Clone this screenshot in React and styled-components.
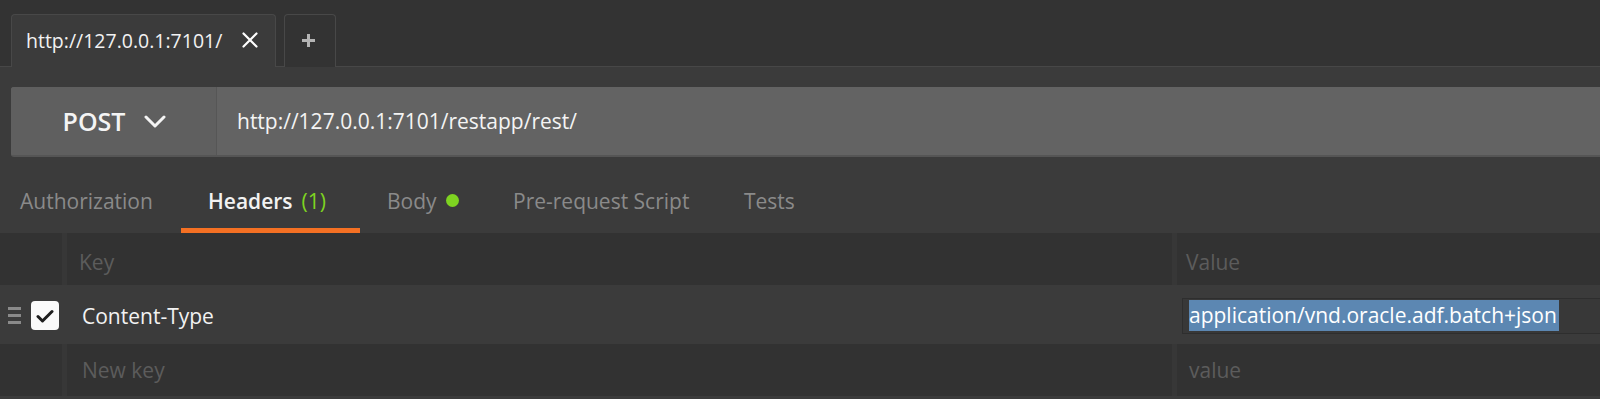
import React from 'react';
import styled, { createGlobalStyle } from 'styled-components';

const Global = createGlobalStyle`
  html, body {
    margin: 0;
    padding: 0;
    background: #333333;
    font-family: "Open Sans", "Noto Sans", sans-serif;
    overflow: hidden;
  }
`;

const Page = styled.div`
  width: 1600px;
  height: 399px;
  display: flex;
  flex-direction: column;
  background: #3b3b3b;
`;

const TabStrip = styled.div`
  height: 67px;
  box-sizing: border-box;
  background: #333333;
  border-bottom: 1px solid #474747;
  display: flex;
  align-items: flex-end;
  gap: 8px;
  padding-left: 11px;
`;

const RequestTab = styled.div`
  width: ${p => p.width}px;
  height: 53px;
  margin-bottom: -1px;
  box-sizing: border-box;
  background: ${p => (p.active ? '#3b3b3b' : '#333333')};
  border: 1px solid #484848;
  border-bottom: none;
  border-radius: 4px 4px 0 0;
  display: flex;
  align-items: center;
  justify-content: ${p => (p.active ? 'space-between' : 'center')};
  padding: 0 17px 2px 14px;
  color: #f2f2f2;
  font-size: 19.5px;
`;

const RequestArea = styled.div`
  padding: 20px 0 0 11px;
`;

const UrlBar = styled.div`
  height: 70px;
  box-sizing: border-box;
  display: flex;
  background: #636363;
  border-bottom: 2px solid #555555;
  border-radius: 3px 0 0 3px;
  overflow: hidden;
`;

const Method = styled.div`
  width: 206px;
  box-sizing: border-box;
  background: #5f5f5f;
  border-right: 1px solid #565656;
  display: flex;
  align-items: center;
  justify-content: center;
  gap: 19px;
  color: #f4f4f4;
  font-size: 25px;
  font-weight: 600;
  padding-left: 2px;
`;

const UrlText = styled.div`
  display: flex;
  align-items: center;
  padding-left: 20px;
  color: #f4f4f4;
  font-size: 21px;
`;

const SectionTabs = styled.div`
  height: 76px;
  display: flex;
  align-items: stretch;
`;

const SectionTab = styled.div`
  width: ${p => p.width}px;
  box-sizing: border-box;
  padding-left: ${p => p.pad}px;
  padding-top: 16px;
  display: flex;
  align-items: center;
  gap: 9px;
  font-size: 21px;
  color: ${p => (p.active ? '#f2f2f2' : '#8a8a8a')};
  font-weight: ${p => (p.active ? 600 : 400)};
  border-bottom: 5px solid ${p => (p.active ? '#f47023' : 'transparent')};
`;

const Count = styled.span`
  color: #7ed321;
  font-weight: 400;
`;

const Dot = styled.span`
  width: 13px;
  height: 13px;
  border-radius: 50%;
  background: #7ed321;
`;

const Table = styled.div`
  flex: 1;
  display: flex;
  flex-direction: column;
  background: #3b3b3b;
`;

const Row = styled.div`
  height: ${p => p.height}px;
  margin-top: ${p => p.top || 0}px;
  display: grid;
  grid-template-columns: 62px 1105px 1fr;
  column-gap: 5px;
  background: ${p => (p.filled ? '#3b3b3b' : '#373737')};
`;

const Cell = styled.div`
  display: flex;
  align-items: center;
  gap: 10px;
  background: ${p => (p.filled ? 'transparent' : '#323232')};
  padding-left: ${p => p.pad || 0}px;
  padding-top: ${p => p.lift || 0}px;
  font-size: 21px;
  color: ${p => (p.muted ? '#5c5c5c' : '#f2f2f2')};
`;

const Handle = styled.div`
  width: 13px;
  display: flex;
  flex-direction: column;
  gap: 4px;
  span {
    height: 3px;
    background: #8a8a8a;
  }
`;

const Checkbox = styled.div`
  width: 28px;
  height: 29px;
  border-radius: 4px;
  background: #fafafa;
  display: flex;
  align-items: center;
  justify-content: center;
`;

const ValueInput = styled.div`
  width: 100%;
  height: 36px;
  box-sizing: border-box;
  margin-left: 5px;
  border: 1px solid #2e2e2e;
  border-right: none;
  background: #383838;
  display: flex;
  align-items: center;
  padding-left: 6px;
`;

const Selected = styled.span`
  background: #5c87b2;
  color: #ffffff;
  line-height: 31px;
  padding-right: 2px;
`;

const CloseIcon = () => (
  <svg width="16" height="16" viewBox="0 0 16 16">
    <path d="M1.5 1.5 L14.5 14.5 M14.5 1.5 L1.5 14.5" stroke="#ffffff" strokeWidth="2.2" strokeLinecap="round" />
  </svg>
);

const PlusIcon = () => (
  <svg width="15" height="15" viewBox="0 0 15 15">
    <path d="M7.5 1 V14 M1 7.5 H14" stroke="#b4b4b4" strokeWidth="3" />
  </svg>
);

const Chevron = () => (
  <svg width="22" height="13" viewBox="0 0 22 13">
    <path d="M2 2 L11 11 L20 2" stroke="#f4f4f4" strokeWidth="3" fill="none" strokeLinecap="round" strokeLinejoin="round" />
  </svg>
);

const Check = () => (
  <svg width="18" height="14" viewBox="0 0 18 14">
    <path d="M2 7.5 L6.5 12 L16 2.5" stroke="#1e1e1e" strokeWidth="3" fill="none" strokeLinecap="round" strokeLinejoin="round" />
  </svg>
);

const sections = [
  { label: 'Authorization', width: 181, pad: 20 },
  { label: 'Headers', width: 179, pad: 27, active: true, count: '(1)' },
  { label: 'Body', width: 126, pad: 27, dot: true },
  { label: 'Pre-request Script', width: 231, pad: 27 },
  { label: 'Tests', width: 120, pad: 27 },
];

export default function App() {
  return (
    <Page>
      <Global />
      <TabStrip>
        <RequestTab active width={265}>
          <span>http://127.0.0.1:7101/</span>
          <CloseIcon />
        </RequestTab>
        <RequestTab width={52}>
          <PlusIcon />
        </RequestTab>
      </TabStrip>

      <RequestArea>
        <UrlBar>
          <Method>
            POST <Chevron />
          </Method>
          <UrlText>http://127.0.0.1:7101/restapp/rest/</UrlText>
        </UrlBar>
      </RequestArea>

      <SectionTabs>
        {sections.map(s => (
          <SectionTab key={s.label} width={s.width} pad={s.pad} active={s.active}>
            {s.label}
            {s.count && <Count>{s.count}</Count>}
            {s.dot && <Dot />}
          </SectionTab>
        ))}
      </SectionTabs>

      <Table>
        <Row height={52}>
          <Cell />
          <Cell muted pad={12} lift={6}>Key</Cell>
          <Cell muted pad={9} lift={6}>Value</Cell>
        </Row>
        <Row height={55} top={3} filled>
          <Cell filled pad={8}>
            <Handle><span /><span /><span /></Handle>
            <Checkbox><Check /></Checkbox>
          </Cell>
          <Cell filled pad={15}>Content-Type</Cell>
          <Cell filled>
            <ValueInput>
              <Selected>application/vnd.oracle.adf.batch+json</Selected>
            </ValueInput>
          </Cell>
        </Row>
        <Row height={52} top={1}>
          <Cell />
          <Cell muted pad={15}>New key</Cell>
          <Cell muted pad={12}>value</Cell>
        </Row>
      </Table>
    </Page>
  );
}
